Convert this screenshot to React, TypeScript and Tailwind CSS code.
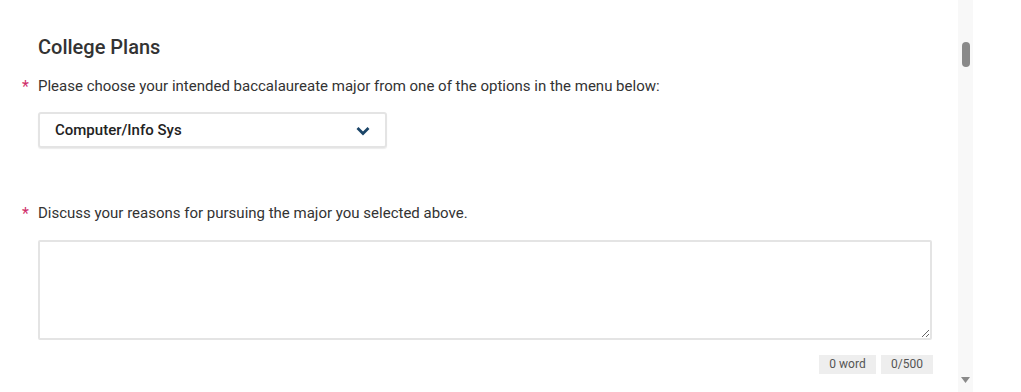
import React from "react";

export default function App() {
  return (
    <div
      className="w-[1021px] h-[392px] flex bg-white overflow-hidden"
      style={{ fontFamily: "Roboto, 'Liberation Sans', sans-serif" }}
    >
      <div className="w-[958px] h-full flex flex-col pt-[34px]">
        <h2 className="pl-[38px] text-[20px] leading-[26px] font-medium text-[#333333]">
          College Plans
        </h2>
        <div className="flex mt-[16px] pl-[22px] h-[20px] items-center">
          <span className="w-[16px] text-[#d0306a] text-[16px] leading-[20px] mt-[2px]">*</span>
          <span className="text-[15px] leading-[20px] text-[#333333]">
            Please choose your intended baccalaureate major from one of the options in the menu below:
          </span>
        </div>
        <div className="ml-[38px] mt-[16px] w-[349px] h-[36px] border-2 border-[#e4e4e4] rounded-[3px] flex items-center justify-between pl-[15px] pr-[15px] shadow-[0_1px_1px_rgba(0,0,0,0.08)]">
          <span className="text-[15px] font-medium text-[#222222]">Computer/Info Sys</span>
          <svg width="14" height="10" viewBox="0 0 14 10" className="mt-[1px]">
            <path d="M1.5 2 L7 7.5 L12.5 2" fill="none" stroke="#1b4568" strokeWidth="2.8" />
          </svg>
        </div>
        <div className="flex mt-[55px] pl-[22px] h-[20px] items-center">
          <span className="w-[16px] text-[#d0306a] text-[16px] leading-[20px] mt-[2px]">*</span>
          <span className="text-[15px] leading-[20px] text-[#333333]">
            Discuss your reasons for pursuing the major you selected above.
          </span>
        </div>
        <textarea className="ml-[38px] mt-[17px] w-[894px] h-[100px] border-2 border-[#e4e4e4] rounded-[2px] outline-none" />
        <div className="mt-[15px] w-[933px] flex justify-end gap-[5px]">
          <span className="w-[57px] h-[19px] bg-[#eeeeee] text-[12px] leading-[19px] text-[#555555] text-center">
            0 word
          </span>
          <span className="w-[52px] h-[19px] bg-[#eeeeee] text-[12px] leading-[19px] text-[#555555] text-center">
            0/500
          </span>
        </div>
      </div>
      <div className="w-[15px] h-full bg-[#f8f8f8] flex flex-col items-center pt-[42px] pb-[9px]">
        <div className="w-[8px] h-[25px] rounded-full bg-[#8a8a8a]" />
        <div className="flex-1" />
        <svg width="9" height="6" viewBox="0 0 9 6">
          <path d="M0 0 L9 0 L4.5 6 Z" fill="#8a8a8a" />
        </svg>
      </div>
      <div className="flex-1 bg-white" />
    </div>
  );
}
